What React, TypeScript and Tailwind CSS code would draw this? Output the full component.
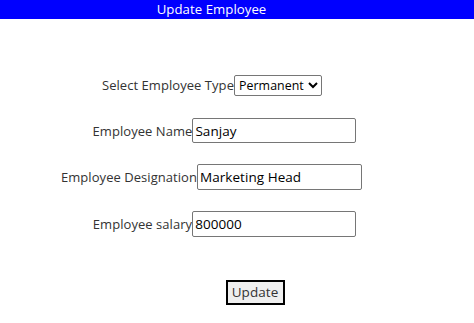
export default function App() {
  return (
    <div className="w-[474px] h-[323px] bg-white text-[#333] font-['Open_Sans',sans-serif] text-[13px] tracking-[0.05px]">
      <div className="h-[19px] bg-[#0000ff] text-white leading-[19px] text-[13.2px]">
        <div className="w-[423px] text-center">Update Employee</div>
      </div>
      <div className="w-[423px] pt-[55px]">
        <div className="flex justify-center items-center h-[22px] pl-[1px]">
          <span className="pt-[2px]">Select Employee Type</span>
          <select className="h-[21px] w-[88px] border border-[#767676] rounded-[2px] pl-0 text-[12.4px] text-black" defaultValue="Permanent">
            <option>Permanent</option>
            <option>Contract</option>
          </select>
        </div>
        <div className="flex justify-center items-center h-[25px] mt-[22px] pl-[26px]">
          <span className="pt-[2px]">Employee Name</span>
          <input className="h-[25px] w-[164px] border border-[#767676] rounded-[2px] px-[2px] text-[13.5px] text-black" defaultValue="Sanjay" />
        </div>
        <div className="flex justify-center items-center h-[26px] mt-[21px]">
          <span className="pt-[2px]">Employee Designation</span>
          <input className="h-[26px] w-[165px] border border-[#767676] rounded-[2px] px-[2px] text-[13.5px] text-black" defaultValue="Marketing Head" />
        </div>
        <div className="flex justify-center items-center h-[26px] mt-[21px] pl-[26px]">
          <span className="pt-[2px]">Employee salary</span>
          <input className="h-[26px] w-[164px] border border-[#767676] rounded-[2px] px-[2px] text-[13.5px] text-black" defaultValue="800000" />
        </div>
        <div className="flex justify-center mt-[43px] pl-[87px]">
          <button className="h-[25px] w-[59px] border-2 border-black bg-[#efefef] text-[13.5px] text-[#333]">Update</button>
        </div>
      </div>
    </div>
  );
}
